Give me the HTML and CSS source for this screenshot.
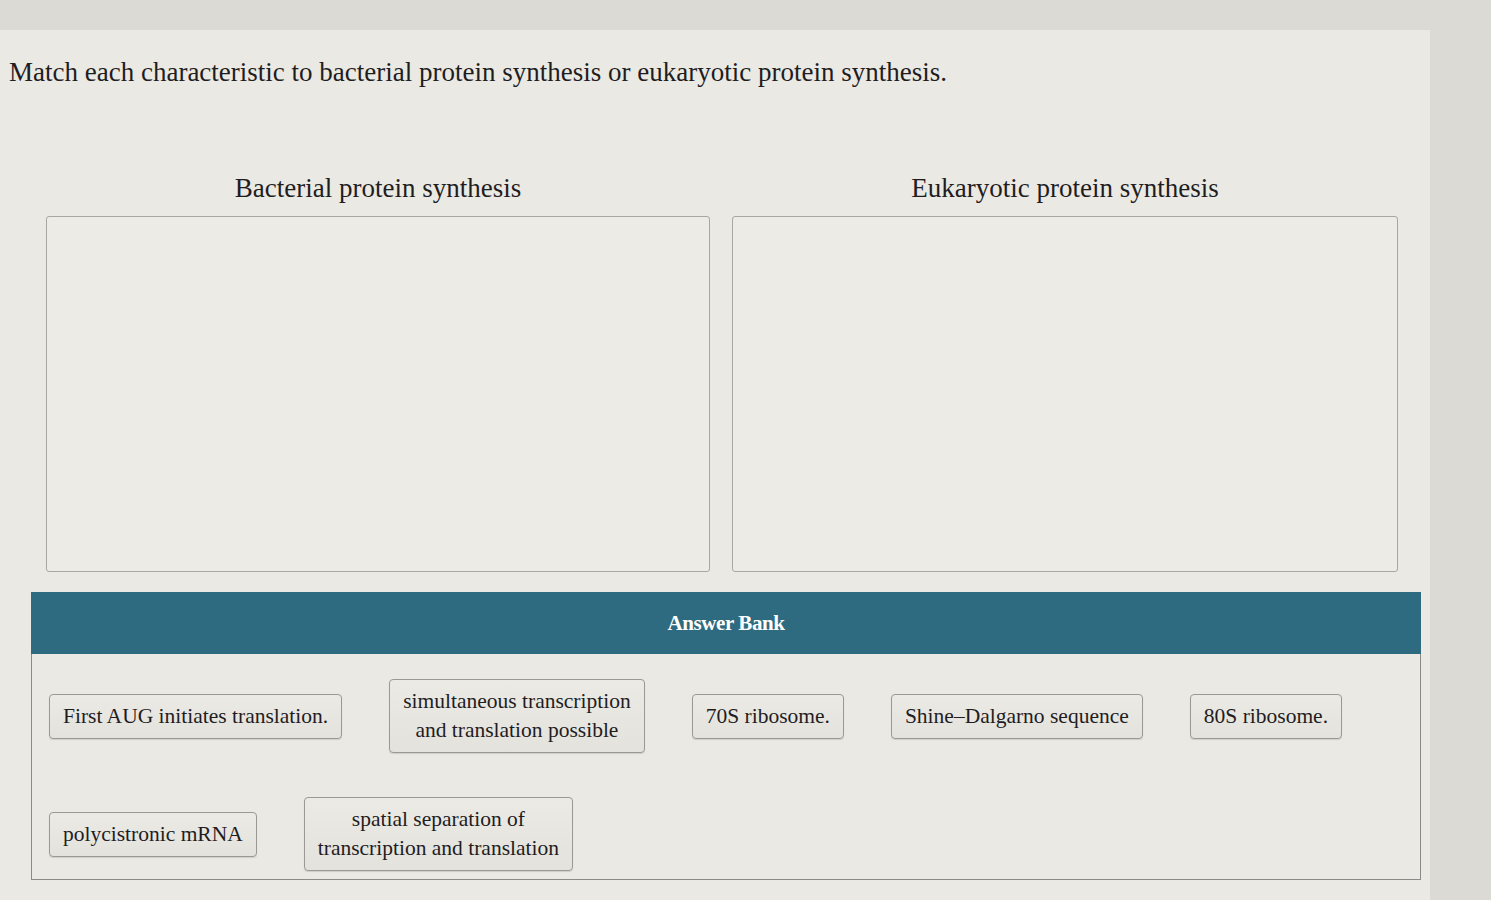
FILE: index.html
```html
<!DOCTYPE html>
<html lang="en">
<head>
    <meta charset="UTF-8">
    <meta name="viewport" content="width=device-width, initial-scale=1.0">
    <title>Protein Synthesis Matching</title>
    <link rel="stylesheet" href="styles.css">
</head>
<body>
    <div class="sheet">
        <p class="prompt">Match each characteristic to bacterial protein synthesis or eukaryotic protein synthesis.</p>

        <div class="targets">
            <div class="target">
                <h2>Bacterial protein synthesis</h2>
                <div class="drop"></div>
            </div>
            <div class="target">
                <h2>Eukaryotic protein synthesis</h2>
                <div class="drop"></div>
            </div>
        </div>

        <div class="bank">
            <div class="bank-head">Answer Bank</div>
            <div class="bank-body">
                <div class="chip">First AUG initiates translation.</div>
                <div class="chip">simultaneous transcription<br>and translation possible</div>
                <div class="chip">70S ribosome.</div>
                <div class="chip">Shine&ndash;Dalgarno sequence</div>
                <div class="chip">80S ribosome.</div>
                <div class="chip">polycistronic mRNA</div>
                <div class="chip">spatial separation of<br>transcription and translation</div>
            </div>
        </div>
    </div>
</body>
</html>
```

FILE: styles.css
```css
body {
    margin: 0;
    background: #dcdad4;
    font-family: "Liberation Serif", "Times New Roman", serif;
    color: #1f1d1f;
    height: 900px;
    overflow: hidden;
}
.sheet {
    margin-top: 30px;
    width: 1430px;
    height: 880px;
    background: #ebe9e3;
    box-sizing: border-box;
    padding: 26px 0 0 0;
}
.prompt {
    margin: 0 0 0 9px;
    font-size: 27px;
    line-height: 32px;
}
.targets {
    display: grid;
    grid-template-columns: 664px 666px;
    gap: 22px;
    margin: 84px 0 0 46px;
}
.target h2 {
    margin: 0 0 12px 0;
    font-size: 27px;
    line-height: 32px;
    font-weight: normal;
    text-align: center;
}
.drop {
    height: 354px;
    border: 1px solid #a9a7a3;
    border-radius: 3px;
    background: #edebe5;
}
.bank {
    margin: 20px 0 0 31px;
    width: 1390px;
}
.bank-head {
    background: #2e6a80;
    color: #fff;
    font-weight: bold;
    font-size: 21px;
    text-align: center;
    height: 62px;
    line-height: 62px;
    letter-spacing: -0.4px;
}
.bank-body {
    display: flex;
    flex-wrap: wrap;
    align-items: center;
    column-gap: 47px;
    row-gap: 44px;
    padding: 25px 17px 8px 17px;
    border: 1px solid #8d8b88;
    border-top: none;
    background: #ebe9e3;
}
.chip {
    font-size: 21.5px;
    line-height: 29px;
    text-align: center;
    padding: 7px 13px;
    border: 1px solid #9b9995;
    border-radius: 4px;
    background: linear-gradient(#eceae5, #e4e2dc);
    box-shadow: 0 1px 1px rgba(0, 0, 0, 0.12);
}
```
